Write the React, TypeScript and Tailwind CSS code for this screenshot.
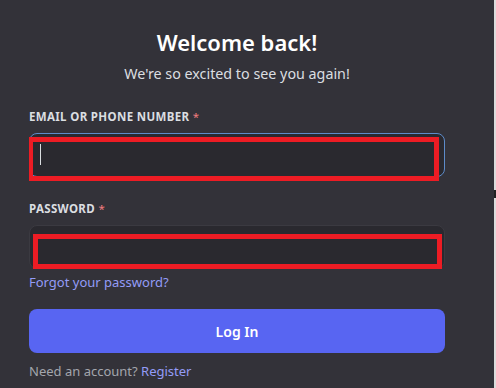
import React from 'react';

const font = { fontFamily: '"Noto Sans", "Open Sans", sans-serif' };

const Label: React.FC<{ text: string }> = ({ text }) => (
  <div className="text-[11.5px] leading-[16px] font-bold tracking-[0.03em] text-[#dbdee1] uppercase">
    {text} <span className="text-[#f27c7f] font-normal">*</span>
  </div>
);

export default function App() {
  return (
    <div className="w-[496px] h-[388px] flex bg-[#333239] overflow-hidden" style={font}>
      <div className="flex-1 flex flex-col pl-[29px] pr-[49px]">
        <h1 className="mt-[27px] text-center text-[22px] leading-[30px] font-semibold text-white">
          Welcome back!
        </h1>
        <p className="mt-[7px] text-center text-[14.3px] leading-[20px] text-[#dbdee1]">
          We're so excited to see you again!
        </p>

        <div className="mt-[25px]">
          <Label text="Email or Phone Number" />
        </div>
        <div className="relative mt-[8px] h-[44px] rounded-[8px] border border-[#5d8bc9] bg-[#2a292f]">
          <span className="absolute left-[10px] top-[10px] h-[21px] w-px bg-[#dbdee1]" />
          <span className="absolute -left-[1px] top-[3px] w-[410px] h-[44px] border-[5px] border-l-4 border-[#ed1c24]" />
        </div>

        <div className="mt-[24px]">
          <Label text="Password" />
        </div>
        <div className="relative mt-[8px] h-[44px] rounded-[8px] border border-[#3b3a41] bg-[#2a292f]">
          <span className="absolute left-[3px] top-[8px] w-[409px] h-[35px] border-[5px] border-[#ed1c24]" />
        </div>

        <a className="mt-[3px] text-[13px] leading-[20px] text-[#949cf7]">Forgot your password?</a>

        <button className="mt-[17px] h-[44px] rounded-[8px] bg-[#5865f2] text-white text-[14px] font-semibold">
          Log In
        </button>

        <p className="mt-[8px] text-[13px] leading-[20px] text-[#a3a6ad]">
          Need an account? <span className="text-[#949cf7]">Register</span>
        </p>
      </div>
      <div className="w-[2px] h-full bg-[#dcdcdc] flex flex-col">
        <span className="mt-[190px] h-[8px] w-[2px] bg-[#222]" />
      </div>
    </div>
  );
}
